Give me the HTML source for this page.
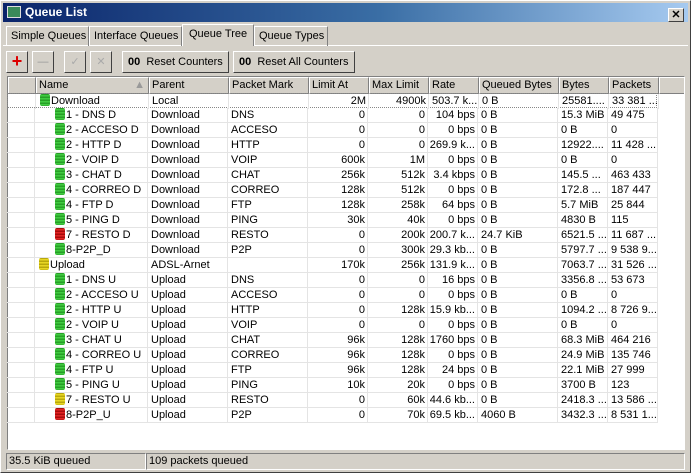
<!DOCTYPE html><html><head><style>
*{margin:0;padding:0;box-sizing:border-box}
body{width:691px;height:473px;background:#d4d0c8;font-family:"Liberation Sans",sans-serif;font-size:11px;color:#000;position:relative;overflow:hidden}
.win{position:absolute;left:0;top:0;width:691px;height:473px;border:1px solid #fff;border-right-color:#404040;border-bottom-color:#404040}
.title{position:absolute;left:3px;top:3px;width:685px;height:19px;background:linear-gradient(90deg,#0a246a,#3a6ea5 55%,#a6caf0);color:#fff;font-weight:bold;font-size:12px;line-height:19px;padding-left:22px}
.ticon{position:absolute;left:4px;top:3px;width:14px;height:12px;background:#3a8a5a;border:1px solid #ddd}
.close{position:absolute;right:4px;top:5px;width:16px;height:14px;background:#d4d0c8;border:1px solid #fff;border-right-color:#404040;border-bottom-color:#404040;color:#000;font-size:11px;line-height:12px;text-align:center;font-weight:bold}
.tab{position:absolute;top:26px;height:20px;border:1px solid #fff;border-bottom:none;border-right-color:#808080;line-height:18px;padding-left:4px;font-size:11px}
.tab.act{top:24px;height:22px;background:#d4d0c8;z-index:2}
.panel{position:absolute;left:3px;top:45px;width:685px;height:406px;border-top:1px solid #fff}
.btn{position:absolute;top:51px;height:22px;border:1px solid #fff;border-right-color:#404040;border-bottom-color:#404040;line-height:20px;font-size:11px}
.grid{position:absolute;left:7px;top:76px;width:678px;height:374px;background:#fff;border:1px solid #808080;border-right-color:#fff;border-bottom-color:#fff;overflow:hidden}
.hdr{position:absolute;top:0;height:17px;background:#d4d0c8;border:1px solid #fff;border-right-color:#808080;border-bottom-color:#808080;line-height:15px;padding-left:2px}
.row{position:absolute;left:0;width:650px;height:15px;border-bottom:1px solid #e4e4e4}
.c{position:absolute;top:0;height:15px;line-height:14px;border-right:1px solid #e4e4e4;white-space:nowrap;overflow:hidden;padding-left:3px}
.r{text-align:right;padding-right:2px;padding-left:0}
.ic{display:inline-block;width:10px;height:12px;vertical-align:-2px;margin-right:1px;border-radius:2px}
.g{background:repeating-linear-gradient(#1a8a1a 0,#4de04d 2px,#1a8a1a 3px)}
.y{background:repeating-linear-gradient(#a09000 0,#ffee30 2px,#a09000 3px)}
.rd{background:repeating-linear-gradient(#8a0000 0,#ff3030 2px,#8a0000 3px)}
.status{position:absolute;top:453px;height:17px;border:1px solid #808080;border-right-color:#fff;border-bottom-color:#fff;line-height:15px;padding-left:2px;font-size:11px}
</style></head><body>
<div class="win"></div>
<div class="title"><div class="ticon"></div>Queue List<div class="close">✕</div></div>
<div class="panel"></div>
<div class="tab" style="left:6px;width:83px">Simple Queues</div>
<div class="tab" style="left:89px;width:93px">Interface Queues</div>
<div class="tab act" style="left:182px;width:72px;padding-left:6px">Queue Tree</div>
<div class="tab" style="left:254px;width:74px">Queue Types</div>
<div class="btn" style="left:6px;width:22px;text-align:center;color:#d00;font-size:18px;font-weight:bold;line-height:19px">+</div>
<div class="btn" style="left:32px;width:22px;text-align:center;color:#999">—</div>
<div class="btn" style="left:64px;width:22px;text-align:center;color:#aaa">✓</div>
<div class="btn" style="left:90px;width:22px;text-align:center;color:#aaa">✕</div>
<div class="btn" style="left:122px;width:107px;padding-left:5px"><b>00</b>&nbsp; Reset Counters</div>
<div class="btn" style="left:233px;width:122px;padding-left:5px"><b>00</b>&nbsp; Reset All Counters</div>
<div class="grid">
<div class="hdr" style="left:0;width:28px"></div>
<div class="hdr" style="left:28px;width:113px">Name<span style="float:right;color:#999;margin-right:3px">▲</span></div>
<div class="hdr" style="left:141px;width:80px">Parent</div>
<div class="hdr" style="left:221px;width:80px">Packet Mark</div>
<div class="hdr" style="left:301px;width:60px">Limit At</div>
<div class="hdr" style="left:361px;width:60px">Max Limit</div>
<div class="hdr" style="left:421px;width:50px">Rate</div>
<div class="hdr" style="left:471px;width:80px">Queued Bytes</div>
<div class="hdr" style="left:551px;width:50px">Bytes</div>
<div class="hdr" style="left:601px;width:50px">Packets</div>
<div class="hdr" style="left:651px;width:30px"></div>
<div id="rows"></div>
</div>
<div class="status" style="left:6px;width:140px">35.5 KiB queued</div>
<div class="status" style="left:146px;width:539px;padding-left:2px">109 packets queued</div>
<div style="position:absolute;left:7px;top:93px">
<div class="row" style="top:0;border:1px dotted #888"><div class="c" style="left:0;width:28px"></div><div class="c" style="left:28px;width:113px;padding-left:4px"><span class="ic g"></span>Download</div><div class="c" style="left:141px;width:80px">Local</div><div class="c" style="left:221px;width:80px"></div><div class="c r" style="left:301px;width:60px">2M</div><div class="c r" style="left:361px;width:60px">4900k</div><div class="c" style="left:421px;width:50px">503.7 k...</div><div class="c" style="left:471px;width:80px">0 B</div><div class="c" style="left:551px;width:50px">25581....</div><div class="c" style="left:601px;width:50px">33 381 ...</div></div>
</div>
<div style="position:absolute;left:7px;top:108px">
<div class="row" style="top:0"><div class="c" style="left:0;width:28px"></div><div class="c" style="left:28px;width:113px;padding-left:20px"><span class="ic g"></span>1 - DNS D</div><div class="c" style="left:141px;width:80px">Download</div><div class="c" style="left:221px;width:80px">DNS</div><div class="c r" style="left:301px;width:60px">0</div><div class="c r" style="left:361px;width:60px">0</div><div class="c r" style="left:421px;width:50px">104 bps</div><div class="c" style="left:471px;width:80px">0 B</div><div class="c" style="left:551px;width:50px">15.3 MiB</div><div class="c" style="left:601px;width:50px">49 475</div></div>
<div class="row" style="top:15px"><div class="c" style="left:0;width:28px"></div><div class="c" style="left:28px;width:113px;padding-left:20px"><span class="ic g"></span>2 - ACCESO D</div><div class="c" style="left:141px;width:80px">Download</div><div class="c" style="left:221px;width:80px">ACCESO</div><div class="c r" style="left:301px;width:60px">0</div><div class="c r" style="left:361px;width:60px">0</div><div class="c r" style="left:421px;width:50px">0 bps</div><div class="c" style="left:471px;width:80px">0 B</div><div class="c" style="left:551px;width:50px">0 B</div><div class="c" style="left:601px;width:50px">0</div></div>
<div class="row" style="top:30px"><div class="c" style="left:0;width:28px"></div><div class="c" style="left:28px;width:113px;padding-left:20px"><span class="ic g"></span>2 - HTTP D</div><div class="c" style="left:141px;width:80px">Download</div><div class="c" style="left:221px;width:80px">HTTP</div><div class="c r" style="left:301px;width:60px">0</div><div class="c r" style="left:361px;width:60px">0</div><div class="c r" style="left:421px;width:50px">269.9 k...</div><div class="c" style="left:471px;width:80px">0 B</div><div class="c" style="left:551px;width:50px">12922....</div><div class="c" style="left:601px;width:50px">11 428 ...</div></div>
<div class="row" style="top:45px"><div class="c" style="left:0;width:28px"></div><div class="c" style="left:28px;width:113px;padding-left:20px"><span class="ic g"></span>2 - VOIP D</div><div class="c" style="left:141px;width:80px">Download</div><div class="c" style="left:221px;width:80px">VOIP</div><div class="c r" style="left:301px;width:60px">600k</div><div class="c r" style="left:361px;width:60px">1M</div><div class="c r" style="left:421px;width:50px">0 bps</div><div class="c" style="left:471px;width:80px">0 B</div><div class="c" style="left:551px;width:50px">0 B</div><div class="c" style="left:601px;width:50px">0</div></div>
<div class="row" style="top:60px"><div class="c" style="left:0;width:28px"></div><div class="c" style="left:28px;width:113px;padding-left:20px"><span class="ic g"></span>3 - CHAT D</div><div class="c" style="left:141px;width:80px">Download</div><div class="c" style="left:221px;width:80px">CHAT</div><div class="c r" style="left:301px;width:60px">256k</div><div class="c r" style="left:361px;width:60px">512k</div><div class="c r" style="left:421px;width:50px">3.4 kbps</div><div class="c" style="left:471px;width:80px">0 B</div><div class="c" style="left:551px;width:50px">145.5 ...</div><div class="c" style="left:601px;width:50px">463 433</div></div>
<div class="row" style="top:75px"><div class="c" style="left:0;width:28px"></div><div class="c" style="left:28px;width:113px;padding-left:20px"><span class="ic g"></span>4 - CORREO D</div><div class="c" style="left:141px;width:80px">Download</div><div class="c" style="left:221px;width:80px">CORREO</div><div class="c r" style="left:301px;width:60px">128k</div><div class="c r" style="left:361px;width:60px">512k</div><div class="c r" style="left:421px;width:50px">0 bps</div><div class="c" style="left:471px;width:80px">0 B</div><div class="c" style="left:551px;width:50px">172.8 ...</div><div class="c" style="left:601px;width:50px">187 447</div></div>
<div class="row" style="top:90px"><div class="c" style="left:0;width:28px"></div><div class="c" style="left:28px;width:113px;padding-left:20px"><span class="ic g"></span>4 - FTP D</div><div class="c" style="left:141px;width:80px">Download</div><div class="c" style="left:221px;width:80px">FTP</div><div class="c r" style="left:301px;width:60px">128k</div><div class="c r" style="left:361px;width:60px">258k</div><div class="c r" style="left:421px;width:50px">64 bps</div><div class="c" style="left:471px;width:80px">0 B</div><div class="c" style="left:551px;width:50px">5.7 MiB</div><div class="c" style="left:601px;width:50px">25 844</div></div>
<div class="row" style="top:105px"><div class="c" style="left:0;width:28px"></div><div class="c" style="left:28px;width:113px;padding-left:20px"><span class="ic g"></span>5 - PING D</div><div class="c" style="left:141px;width:80px">Download</div><div class="c" style="left:221px;width:80px">PING</div><div class="c r" style="left:301px;width:60px">30k</div><div class="c r" style="left:361px;width:60px">40k</div><div class="c r" style="left:421px;width:50px">0 bps</div><div class="c" style="left:471px;width:80px">0 B</div><div class="c" style="left:551px;width:50px">4830 B</div><div class="c" style="left:601px;width:50px">115</div></div>
<div class="row" style="top:120px"><div class="c" style="left:0;width:28px"></div><div class="c" style="left:28px;width:113px;padding-left:20px"><span class="ic rd"></span>7 - RESTO D</div><div class="c" style="left:141px;width:80px">Download</div><div class="c" style="left:221px;width:80px">RESTO</div><div class="c r" style="left:301px;width:60px">0</div><div class="c r" style="left:361px;width:60px">200k</div><div class="c r" style="left:421px;width:50px">200.7 k...</div><div class="c" style="left:471px;width:80px">24.7 KiB</div><div class="c" style="left:551px;width:50px">6521.5 ...</div><div class="c" style="left:601px;width:50px">11 687 ...</div></div>
<div class="row" style="top:135px"><div class="c" style="left:0;width:28px"></div><div class="c" style="left:28px;width:113px;padding-left:20px"><span class="ic g"></span>8-P2P_D</div><div class="c" style="left:141px;width:80px">Download</div><div class="c" style="left:221px;width:80px">P2P</div><div class="c r" style="left:301px;width:60px">0</div><div class="c r" style="left:361px;width:60px">300k</div><div class="c r" style="left:421px;width:50px">29.3 kb...</div><div class="c" style="left:471px;width:80px">0 B</div><div class="c" style="left:551px;width:50px">5797.7 ...</div><div class="c" style="left:601px;width:50px">9 538 9...</div></div>
<div class="row" style="top:150px"><div class="c" style="left:0;width:28px"></div><div class="c" style="left:28px;width:113px;padding-left:4px"><span class="ic y"></span>Upload</div><div class="c" style="left:141px;width:80px">ADSL-Arnet</div><div class="c" style="left:221px;width:80px"></div><div class="c r" style="left:301px;width:60px">170k</div><div class="c r" style="left:361px;width:60px">256k</div><div class="c r" style="left:421px;width:50px">131.9 k...</div><div class="c" style="left:471px;width:80px">0 B</div><div class="c" style="left:551px;width:50px">7063.7 ...</div><div class="c" style="left:601px;width:50px">31 526 ...</div></div>
<div class="row" style="top:165px"><div class="c" style="left:0;width:28px"></div><div class="c" style="left:28px;width:113px;padding-left:20px"><span class="ic g"></span>1 - DNS U</div><div class="c" style="left:141px;width:80px">Upload</div><div class="c" style="left:221px;width:80px">DNS</div><div class="c r" style="left:301px;width:60px">0</div><div class="c r" style="left:361px;width:60px">0</div><div class="c r" style="left:421px;width:50px">16 bps</div><div class="c" style="left:471px;width:80px">0 B</div><div class="c" style="left:551px;width:50px">3356.8 ...</div><div class="c" style="left:601px;width:50px">53 673</div></div>
<div class="row" style="top:180px"><div class="c" style="left:0;width:28px"></div><div class="c" style="left:28px;width:113px;padding-left:20px"><span class="ic g"></span>2 - ACCESO U</div><div class="c" style="left:141px;width:80px">Upload</div><div class="c" style="left:221px;width:80px">ACCESO</div><div class="c r" style="left:301px;width:60px">0</div><div class="c r" style="left:361px;width:60px">0</div><div class="c r" style="left:421px;width:50px">0 bps</div><div class="c" style="left:471px;width:80px">0 B</div><div class="c" style="left:551px;width:50px">0 B</div><div class="c" style="left:601px;width:50px">0</div></div>
<div class="row" style="top:195px"><div class="c" style="left:0;width:28px"></div><div class="c" style="left:28px;width:113px;padding-left:20px"><span class="ic g"></span>2 - HTTP U</div><div class="c" style="left:141px;width:80px">Upload</div><div class="c" style="left:221px;width:80px">HTTP</div><div class="c r" style="left:301px;width:60px">0</div><div class="c r" style="left:361px;width:60px">128k</div><div class="c r" style="left:421px;width:50px">15.9 kb...</div><div class="c" style="left:471px;width:80px">0 B</div><div class="c" style="left:551px;width:50px">1094.2 ...</div><div class="c" style="left:601px;width:50px">8 726 9...</div></div>
<div class="row" style="top:210px"><div class="c" style="left:0;width:28px"></div><div class="c" style="left:28px;width:113px;padding-left:20px"><span class="ic g"></span>2 - VOIP U</div><div class="c" style="left:141px;width:80px">Upload</div><div class="c" style="left:221px;width:80px">VOIP</div><div class="c r" style="left:301px;width:60px">0</div><div class="c r" style="left:361px;width:60px">0</div><div class="c r" style="left:421px;width:50px">0 bps</div><div class="c" style="left:471px;width:80px">0 B</div><div class="c" style="left:551px;width:50px">0 B</div><div class="c" style="left:601px;width:50px">0</div></div>
<div class="row" style="top:225px"><div class="c" style="left:0;width:28px"></div><div class="c" style="left:28px;width:113px;padding-left:20px"><span class="ic g"></span>3 - CHAT U</div><div class="c" style="left:141px;width:80px">Upload</div><div class="c" style="left:221px;width:80px">CHAT</div><div class="c r" style="left:301px;width:60px">96k</div><div class="c r" style="left:361px;width:60px">128k</div><div class="c r" style="left:421px;width:50px">1760 bps</div><div class="c" style="left:471px;width:80px">0 B</div><div class="c" style="left:551px;width:50px">68.3 MiB</div><div class="c" style="left:601px;width:50px">464 216</div></div>
<div class="row" style="top:240px"><div class="c" style="left:0;width:28px"></div><div class="c" style="left:28px;width:113px;padding-left:20px"><span class="ic g"></span>4 - CORREO U</div><div class="c" style="left:141px;width:80px">Upload</div><div class="c" style="left:221px;width:80px">CORREO</div><div class="c r" style="left:301px;width:60px">96k</div><div class="c r" style="left:361px;width:60px">128k</div><div class="c r" style="left:421px;width:50px">0 bps</div><div class="c" style="left:471px;width:80px">0 B</div><div class="c" style="left:551px;width:50px">24.9 MiB</div><div class="c" style="left:601px;width:50px">135 746</div></div>
<div class="row" style="top:255px"><div class="c" style="left:0;width:28px"></div><div class="c" style="left:28px;width:113px;padding-left:20px"><span class="ic g"></span>4 - FTP U</div><div class="c" style="left:141px;width:80px">Upload</div><div class="c" style="left:221px;width:80px">FTP</div><div class="c r" style="left:301px;width:60px">96k</div><div class="c r" style="left:361px;width:60px">128k</div><div class="c r" style="left:421px;width:50px">24 bps</div><div class="c" style="left:471px;width:80px">0 B</div><div class="c" style="left:551px;width:50px">22.1 MiB</div><div class="c" style="left:601px;width:50px">27 999</div></div>
<div class="row" style="top:270px"><div class="c" style="left:0;width:28px"></div><div class="c" style="left:28px;width:113px;padding-left:20px"><span class="ic g"></span>5 - PING U</div><div class="c" style="left:141px;width:80px">Upload</div><div class="c" style="left:221px;width:80px">PING</div><div class="c r" style="left:301px;width:60px">10k</div><div class="c r" style="left:361px;width:60px">20k</div><div class="c r" style="left:421px;width:50px">0 bps</div><div class="c" style="left:471px;width:80px">0 B</div><div class="c" style="left:551px;width:50px">3700 B</div><div class="c" style="left:601px;width:50px">123</div></div>
<div class="row" style="top:285px"><div class="c" style="left:0;width:28px"></div><div class="c" style="left:28px;width:113px;padding-left:20px"><span class="ic y"></span>7 - RESTO U</div><div class="c" style="left:141px;width:80px">Upload</div><div class="c" style="left:221px;width:80px">RESTO</div><div class="c r" style="left:301px;width:60px">0</div><div class="c r" style="left:361px;width:60px">60k</div><div class="c r" style="left:421px;width:50px">44.6 kb...</div><div class="c" style="left:471px;width:80px">0 B</div><div class="c" style="left:551px;width:50px">2418.3 ...</div><div class="c" style="left:601px;width:50px">13 586 ...</div></div>
<div class="row" style="top:300px"><div class="c" style="left:0;width:28px"></div><div class="c" style="left:28px;width:113px;padding-left:20px"><span class="ic rd"></span>8-P2P_U</div><div class="c" style="left:141px;width:80px">Upload</div><div class="c" style="left:221px;width:80px">P2P</div><div class="c r" style="left:301px;width:60px">0</div><div class="c r" style="left:361px;width:60px">70k</div><div class="c r" style="left:421px;width:50px">69.5 kb...</div><div class="c" style="left:471px;width:80px">4060 B</div><div class="c" style="left:551px;width:50px">3432.3 ...</div><div class="c" style="left:601px;width:50px">8 531 1...</div></div>
</div>
</body></html>
